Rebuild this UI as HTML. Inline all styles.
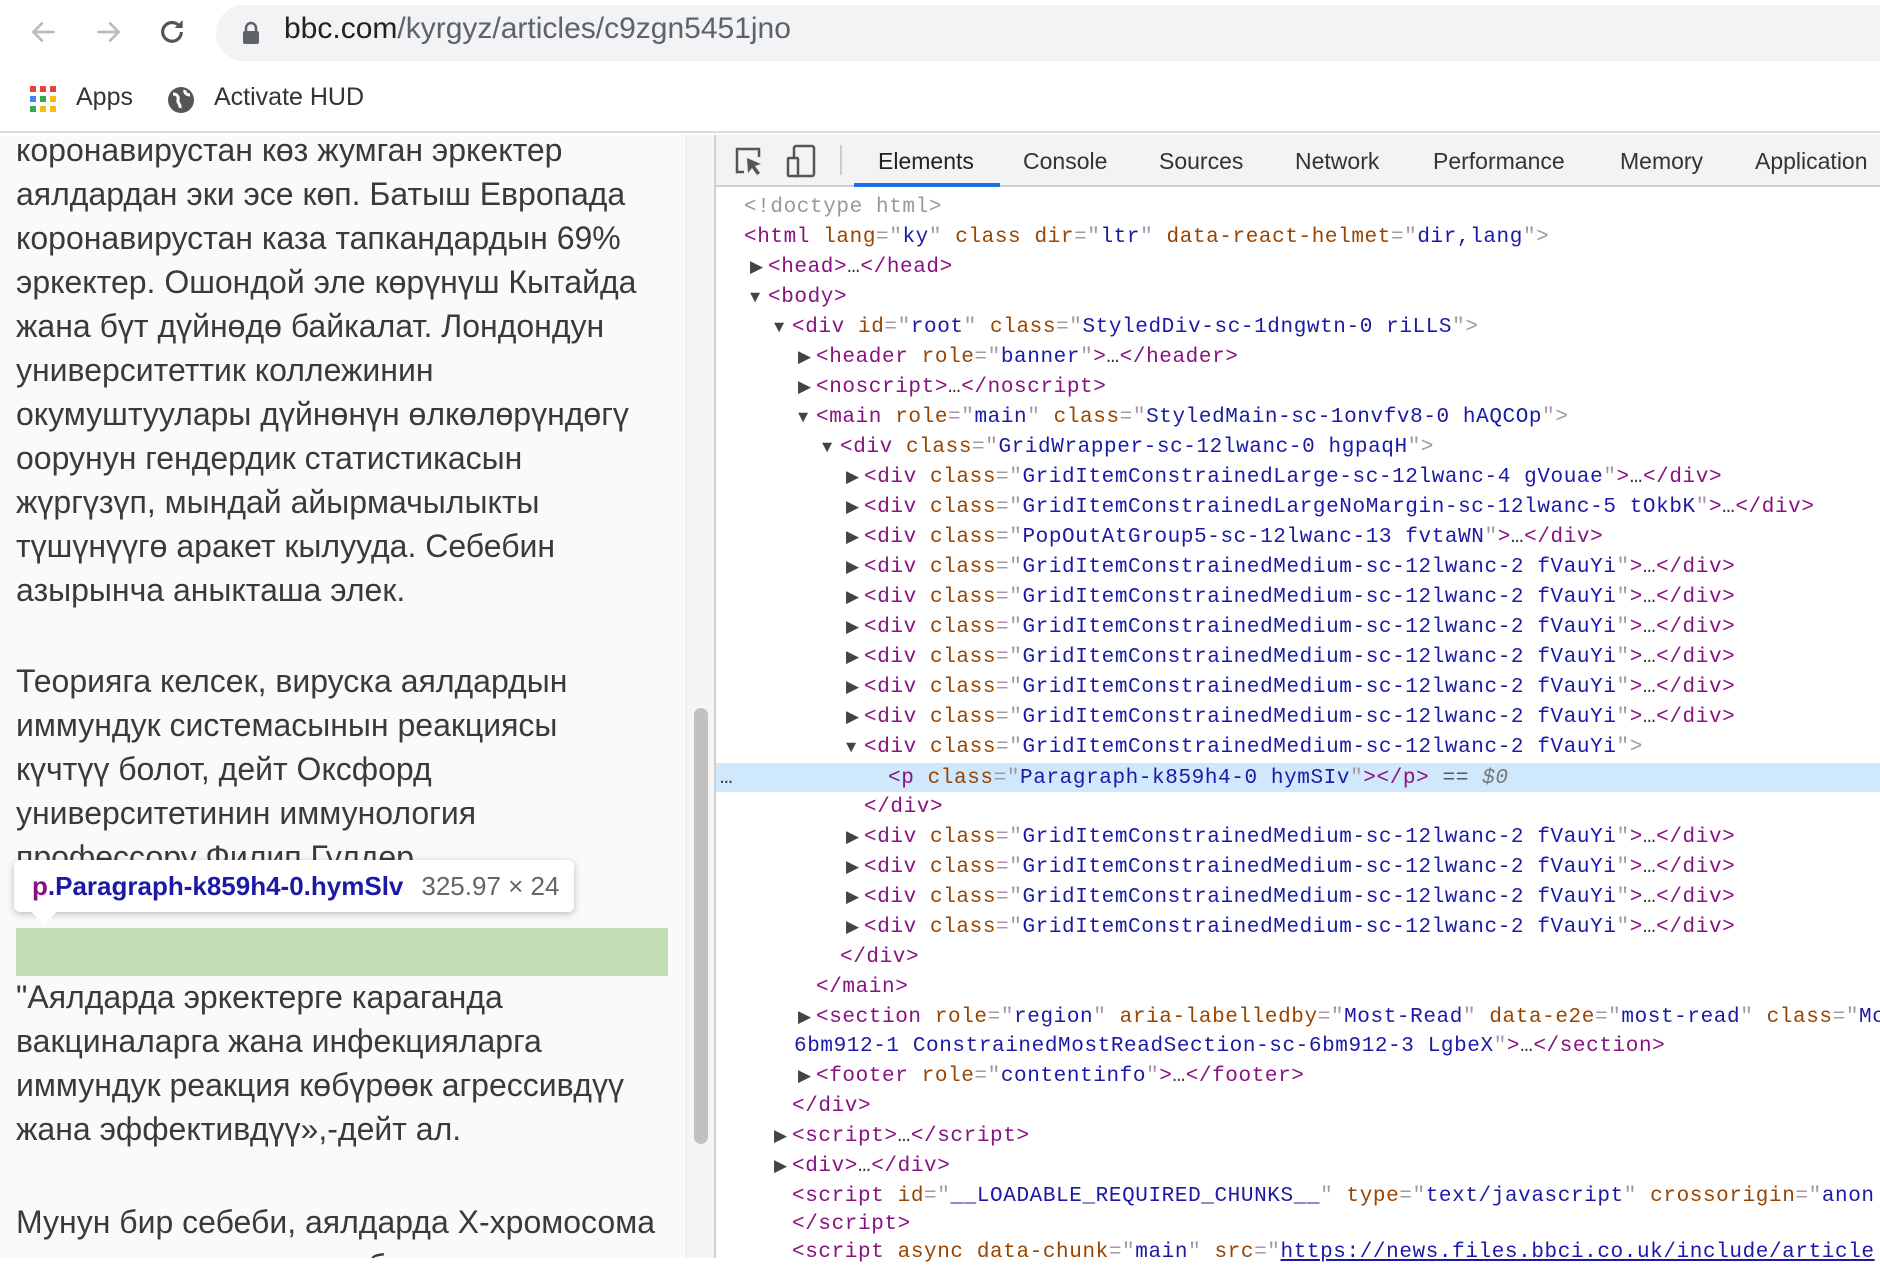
<!DOCTYPE html>
<html><head><meta charset="utf-8"><style>
*{margin:0;padding:0;box-sizing:border-box}
body{width:1880px;height:1258px;overflow:hidden;background:#fff;font-family:"Liberation Sans",sans-serif;position:relative}
.abs{position:absolute}
#top{left:0;top:0;width:1880px;height:133px;background:#fff;border-bottom:2px solid #dadce0}
#addr{left:216px;top:5px;width:1700px;height:56px;border-radius:28px;background:#f1f3f4}
#url{left:284px;top:12px;font-size:30px;color:#202124;white-space:nowrap}
#url span{color:#5f6368}
.bm{top:83px;font-size:25px;color:#333}
#left{left:0;top:135px;width:686px;height:1123px;background:#fafafa;overflow:hidden}
.lt{position:absolute;left:16px;font-size:32px;line-height:44px;color:#3a3a3a;white-space:nowrap}
#sb{left:686px;top:135px;width:30px;height:1123px;background:#f5f5f5;border-left:1px solid #e6e6e6;border-right:2px solid #d0d0d0}
#thumb{left:694px;top:708px;width:14px;height:436px;border-radius:7px;background:#c1c1c1}
#hl{left:16px;top:928px;width:652px;height:48px;background:#c3dcb5}
#tip{left:14px;top:860px;width:560px;height:52px;background:#fff;border-radius:6px;box-shadow:0 2px 8px rgba(0,0,0,.25);font-size:26px;line-height:52px;padding-left:18px;white-space:nowrap}
#tiparrow{left:30px;top:910px;width:0;height:0;border-left:14px solid transparent;border-right:14px solid transparent;border-top:16px solid #fff}
#dt{left:716px;top:135px;width:1164px;height:1123px;background:#fff}
#tabs{left:716px;top:135px;width:1164px;height:52px;background:#f3f3f3;border-bottom:2px solid #cfcfcf}
.tab{position:absolute;top:148px;font-size:23px;color:#333}
#ul{left:854px;top:183px;width:146px;height:4px;background:#1a73e8}
.row{position:absolute;left:0;width:1880px;height:30px;line-height:34px;font-family:"Liberation Mono",monospace;font-size:21px;letter-spacing:0.6px;white-space:nowrap;color:#881280;overflow:hidden}
.t{color:#881280}.a{color:#994500}.v{color:#1a1aa6}.p{color:#a894a6}.g{color:#999}
.tri{display:inline-block;font-size:17px;color:#444;width:16px;margin-left:-18px;margin-right:2px}
</style></head><body>
<div id="top" class="abs"></div>
<svg class="abs" style="left:28px;top:16px" width="32" height="32" viewBox="0 0 24 24"><path d="M20 12H5M11 5l-7 7 7 7" stroke="#bbb" stroke-width="2" fill="none"/></svg>
<svg class="abs" style="left:92px;top:16px" width="32" height="32" viewBox="0 0 24 24"><path d="M4 12h15M13 5l7 7-7 7" stroke="#bbb" stroke-width="2" fill="none"/></svg>
<svg class="abs" style="left:156px;top:16px" width="32" height="32" viewBox="0 0 24 24"><path d="M19 12a7 7 0 1 1-2-5" stroke="#555" stroke-width="2.4" fill="none"/><path d="M20 3v6h-6z" fill="#555"/></svg>
<div id="addr" class="abs"></div>
<svg class="abs" style="left:242px;top:21px" width="18" height="24" viewBox="0 0 18 24"><path d="M4 11V7a5 5 0 0 1 10 0v4" stroke="#5f6368" stroke-width="2.5" fill="none"/><rect x="1" y="10" width="16" height="13" rx="2" fill="#5f6368"/></svg>
<div id="url" class="abs">bbc.com<span>/kyrgyz/articles/c9zgn5451jno</span></div>
<svg class="abs" style="left:30px;top:86px" width="28" height="28" viewBox="0 0 28 28">
<rect x="0" y="0" width="6" height="6" fill="#ea4335"/><rect x="10" y="0" width="6" height="6" fill="#ea4335"/><rect x="20" y="0" width="6" height="6" fill="#ea4335"/>
<rect x="0" y="10" width="6" height="6" fill="#4285f4"/><rect x="10" y="10" width="6" height="6" fill="#34a853"/><rect x="20" y="10" width="6" height="6" fill="#fbbc05"/>
<rect x="0" y="20" width="6" height="6" fill="#34a853"/><rect x="10" y="20" width="6" height="6" fill="#fbbc05"/><rect x="20" y="20" width="6" height="6" fill="#fbbc05"/></svg>
<div class="abs bm" style="left:76px">Apps</div>
<svg class="abs" style="left:167px;top:86px" width="28" height="28" viewBox="0 0 28 28"><circle cx="14" cy="14" r="13" fill="#555"/><path d="M6 8c4 0 6 3 5 6s3 4 2 8M18 4c-1 3 2 5 5 5" stroke="#fff" stroke-width="3" fill="none"/></svg>
<div class="abs bm" style="left:214px">Activate HUD</div>

<div id="left" class="abs">
<div class="lt" style="top:-7px">коронавирустан көз жумган эркектер<br>аялдардан эки эсе көп. Батыш Европада<br>коронавирустан каза тапкандардын 69%<br>эркектер. Ошондой эле көрүнүш Кытайда<br>жана бүт дүйнөдө байкалат. Лондондун<br>университеттик коллежинин<br>окумуштуулары дүйнөнүн өлкөлөрүндөгү<br>оорунун гендердик статистикасын<br>жүргүзүп, мындай айырмачылыкты<br>түшүнүүгө аракет кылууда. Себебин<br>азырынча аныкташа элек.</div>
<div class="lt" style="top:524px">Теорияга келсек, вируска аялдардын<br>иммундук системасынын реакциясы<br>күчтүү болот, дейт Оксфорд<br>университетинин иммунология<br>профессору Филип Гулдер.</div>
<div class="lt" style="top:840px">"Аялдарда эркектерге караганда<br>вакциналарга жана инфекцияларга<br>иммундук реакция көбүрөөк агрессивдүү<br>жана эффективдүү»,-дейт ал.</div>
<div class="lt" style="top:1065px">Мунун бир себеби, аялдарда Х-хромосома<br>эки, ал эми эркектерде бирөө.</div>
</div>
<div id="hl" class="abs"></div>
<div id="tip" class="abs"><b style="color:#881280">p</b><b style="color:#1a1aa6">.Paragraph-k859h4-0.hymSlv</b><span style="color:#666;margin-left:18px">325.97 × 24</span></div>
<div id="tiparrow" class="abs"></div>
<div id="sb" class="abs"></div>
<div id="thumb" class="abs"></div>

<div id="dt" class="abs"></div>
<div id="tabs" class="abs"></div>
<svg class="abs" style="left:734px;top:146px" width="30" height="32" viewBox="0 0 30 32"><path d="M10 26H3V3h22v8" stroke="#555" stroke-width="2.5" fill="none"/><path d="M13 12l14 6-6 2 5 7-3 2-5-7-4 5z" fill="#555"/></svg>
<svg class="abs" style="left:786px;top:144px" width="32" height="34" viewBox="0 0 32 34"><rect x="8" y="2" width="20" height="30" rx="2" stroke="#555" stroke-width="2.5" fill="none"/><rect x="2" y="14" width="10" height="18" rx="1" stroke="#555" stroke-width="2.5" fill="#f3f3f3"/></svg>
<div class="abs" style="left:840px;top:145px;width:2px;height:30px;background:#ccc"></div>
<div class="tab" style="left:878px;color:#222">Elements</div>
<div class="tab" style="left:1023px">Console</div>
<div class="tab" style="left:1159px">Sources</div>
<div class="tab" style="left:1295px">Network</div>
<div class="tab" style="left:1433px">Performance</div>
<div class="tab" style="left:1620px">Memory</div>
<div class="tab" style="left:1755px">Application</div>
<div id="ul" class="abs"></div>

<div class="row" style="top:191px;padding-left:744px"><span class="g">&lt;!doctype html&gt;</span></div>
<div class="row" style="top:221px;padding-left:744px">&lt;html <span class="a">lang</span><span class="p">="</span><span class="v">ky</span><span class="p">"</span> <span class="a">class dir</span><span class="p">="</span><span class="v">ltr</span><span class="p">"</span> <span class="a">data-react-helmet</span><span class="p">="</span><span class="v">dir,lang</span><span class="p">"&gt;</span></div>
<div class="row" style="top:251px;padding-left:768px"><span class="tri">▶</span>&lt;head&gt;<span style="color:#333">…</span>&lt;/head&gt;</div>
<div class="row" style="top:281px;padding-left:768px"><span class="tri">▼</span>&lt;body&gt;</div>
<div class="row" style="top:311px;padding-left:792px"><span class="tri">▼</span>&lt;div <span class="a">id</span><span class="p">="</span><span class="v">root</span><span class="p">"</span> <span class="a">class</span><span class="p">="</span><span class="v">StyledDiv-sc-1dngwtn-0 riLLS</span><span class="p">"&gt;</span></div>
<div class="row" style="top:341px;padding-left:816px"><span class="tri">▶</span>&lt;header <span class="a">role</span><span class="p">="</span><span class="v">banner</span><span class="p">"</span>&gt;<span style="color:#333">…</span>&lt;/header&gt;</div>
<div class="row" style="top:371px;padding-left:816px"><span class="tri">▶</span>&lt;noscript&gt;<span style="color:#333">…</span>&lt;/noscript&gt;</div>
<div class="row" style="top:401px;padding-left:816px"><span class="tri">▼</span>&lt;main <span class="a">role</span><span class="p">="</span><span class="v">main</span><span class="p">"</span> <span class="a">class</span><span class="p">="</span><span class="v">StyledMain-sc-1onvfv8-0 hAQCOp</span><span class="p">"&gt;</span></div>
<div class="row" style="top:431px;padding-left:840px"><span class="tri">▼</span>&lt;div <span class="a">class</span><span class="p">="</span><span class="v">GridWrapper-sc-12lwanc-0 hgpaqH</span><span class="p">"&gt;</span></div>
<div class="row" style="top:461px;padding-left:864px"><span class="tri">▶</span>&lt;div <span class="a">class</span><span class="p">="</span><span class="v">GridItemConstrainedLarge-sc-12lwanc-4 gVouae</span><span class="p">"</span>&gt;<span style="color:#333">…</span>&lt;/div&gt;</div>
<div class="row" style="top:491px;padding-left:864px"><span class="tri">▶</span>&lt;div <span class="a">class</span><span class="p">="</span><span class="v">GridItemConstrainedLargeNoMargin-sc-12lwanc-5 tOkbK</span><span class="p">"</span>&gt;<span style="color:#333">…</span>&lt;/div&gt;</div>
<div class="row" style="top:521px;padding-left:864px"><span class="tri">▶</span>&lt;div <span class="a">class</span><span class="p">="</span><span class="v">PopOutAtGroup5-sc-12lwanc-13 fvtaWN</span><span class="p">"</span>&gt;<span style="color:#333">…</span>&lt;/div&gt;</div>
<div class="row" style="top:551px;padding-left:864px"><span class="tri">▶</span>&lt;div <span class="a">class</span><span class="p">="</span><span class="v">GridItemConstrainedMedium-sc-12lwanc-2 fVauYi</span><span class="p">"</span>&gt;<span style="color:#333">…</span>&lt;/div&gt;</div>
<div class="row" style="top:581px;padding-left:864px"><span class="tri">▶</span>&lt;div <span class="a">class</span><span class="p">="</span><span class="v">GridItemConstrainedMedium-sc-12lwanc-2 fVauYi</span><span class="p">"</span>&gt;<span style="color:#333">…</span>&lt;/div&gt;</div>
<div class="row" style="top:611px;padding-left:864px"><span class="tri">▶</span>&lt;div <span class="a">class</span><span class="p">="</span><span class="v">GridItemConstrainedMedium-sc-12lwanc-2 fVauYi</span><span class="p">"</span>&gt;<span style="color:#333">…</span>&lt;/div&gt;</div>
<div class="row" style="top:641px;padding-left:864px"><span class="tri">▶</span>&lt;div <span class="a">class</span><span class="p">="</span><span class="v">GridItemConstrainedMedium-sc-12lwanc-2 fVauYi</span><span class="p">"</span>&gt;<span style="color:#333">…</span>&lt;/div&gt;</div>
<div class="row" style="top:671px;padding-left:864px"><span class="tri">▶</span>&lt;div <span class="a">class</span><span class="p">="</span><span class="v">GridItemConstrainedMedium-sc-12lwanc-2 fVauYi</span><span class="p">"</span>&gt;<span style="color:#333">…</span>&lt;/div&gt;</div>
<div class="row" style="top:701px;padding-left:864px"><span class="tri">▶</span>&lt;div <span class="a">class</span><span class="p">="</span><span class="v">GridItemConstrainedMedium-sc-12lwanc-2 fVauYi</span><span class="p">"</span>&gt;<span style="color:#333">…</span>&lt;/div&gt;</div>
<div class="row" style="top:731px;padding-left:864px"><span class="tri">▼</span>&lt;div <span class="a">class</span><span class="p">="</span><span class="v">GridItemConstrainedMedium-sc-12lwanc-2 fVauYi</span><span class="p">"&gt;</span></div>
<div class="row" style="top:763px;left:716px;width:1164px;height:29px;line-height:31px;background:#cfe8fc;padding-left:172px"><span style="position:absolute;left:4px;color:#333">…</span>&lt;p <span class="a">class</span><span class="p">="</span><span class="v">Paragraph-k859h4-0 hymSIv</span><span class="p">"</span>&gt;&lt;/p&gt; <span style="color:#555">==</span> <i style="color:#777">$0</i></div>
<div class="row" style="top:791px;padding-left:864px">&lt;/div&gt;</div>
<div class="row" style="top:821px;padding-left:864px"><span class="tri">▶</span>&lt;div <span class="a">class</span><span class="p">="</span><span class="v">GridItemConstrainedMedium-sc-12lwanc-2 fVauYi</span><span class="p">"</span>&gt;<span style="color:#333">…</span>&lt;/div&gt;</div>
<div class="row" style="top:851px;padding-left:864px"><span class="tri">▶</span>&lt;div <span class="a">class</span><span class="p">="</span><span class="v">GridItemConstrainedMedium-sc-12lwanc-2 fVauYi</span><span class="p">"</span>&gt;<span style="color:#333">…</span>&lt;/div&gt;</div>
<div class="row" style="top:881px;padding-left:864px"><span class="tri">▶</span>&lt;div <span class="a">class</span><span class="p">="</span><span class="v">GridItemConstrainedMedium-sc-12lwanc-2 fVauYi</span><span class="p">"</span>&gt;<span style="color:#333">…</span>&lt;/div&gt;</div>
<div class="row" style="top:911px;padding-left:864px"><span class="tri">▶</span>&lt;div <span class="a">class</span><span class="p">="</span><span class="v">GridItemConstrainedMedium-sc-12lwanc-2 fVauYi</span><span class="p">"</span>&gt;<span style="color:#333">…</span>&lt;/div&gt;</div>
<div class="row" style="top:941px;padding-left:840px">&lt;/div&gt;</div>
<div class="row" style="top:971px;padding-left:816px">&lt;/main&gt;</div>
<div class="row" style="top:1001px;padding-left:816px"><span class="tri">▶</span>&lt;section <span class="a">role</span><span class="p">="</span><span class="v">region</span><span class="p">"</span> <span class="a">aria-labelledby</span><span class="p">="</span><span class="v">Most-Read</span><span class="p">"</span> <span class="a">data-e2e</span><span class="p">="</span><span class="v">most-read</span><span class="p">"</span> <span class="a">class</span><span class="p">="</span><span class="v">Mo</span></div>
<div class="row" style="top:1030px;padding-left:794px"><span class="v">6bm912-1 ConstrainedMostReadSection-sc-6bm912-3 LgbeX</span><span class="p">"</span>&gt;<span style="color:#333">…</span>&lt;/section&gt;</div>
<div class="row" style="top:1060px;padding-left:816px"><span class="tri">▶</span>&lt;footer <span class="a">role</span><span class="p">="</span><span class="v">contentinfo</span><span class="p">"</span>&gt;<span style="color:#333">…</span>&lt;/footer&gt;</div>
<div class="row" style="top:1090px;padding-left:792px">&lt;/div&gt;</div>
<div class="row" style="top:1120px;padding-left:792px"><span class="tri">▶</span>&lt;script&gt;<span style="color:#333">…</span>&lt;/script&gt;</div>
<div class="row" style="top:1150px;padding-left:792px"><span class="tri">▶</span>&lt;div&gt;<span style="color:#333">…</span>&lt;/div&gt;</div>
<div class="row" style="top:1180px;padding-left:792px">&lt;script <span class="a">id</span><span class="p">="</span><span class="v">__LOADABLE_REQUIRED_CHUNKS__</span><span class="p">"</span> <span class="a">type</span><span class="p">="</span><span class="v">text/javascript</span><span class="p">"</span> <span class="a">crossorigin</span><span class="p">="</span><span class="v">anon</span></div>
<div class="row" style="top:1208px;padding-left:792px">&lt;/script&gt;</div>
<div class="row" style="top:1236px;padding-left:792px">&lt;script <span class="a">async data-chunk</span><span class="p">="</span><span class="v">main</span><span class="p">"</span> <span class="a">src</span><span class="p">="</span><span class="v" style="text-decoration:underline">https://news.files.bbci.co.uk/include/article</span></div>
</body></html>
